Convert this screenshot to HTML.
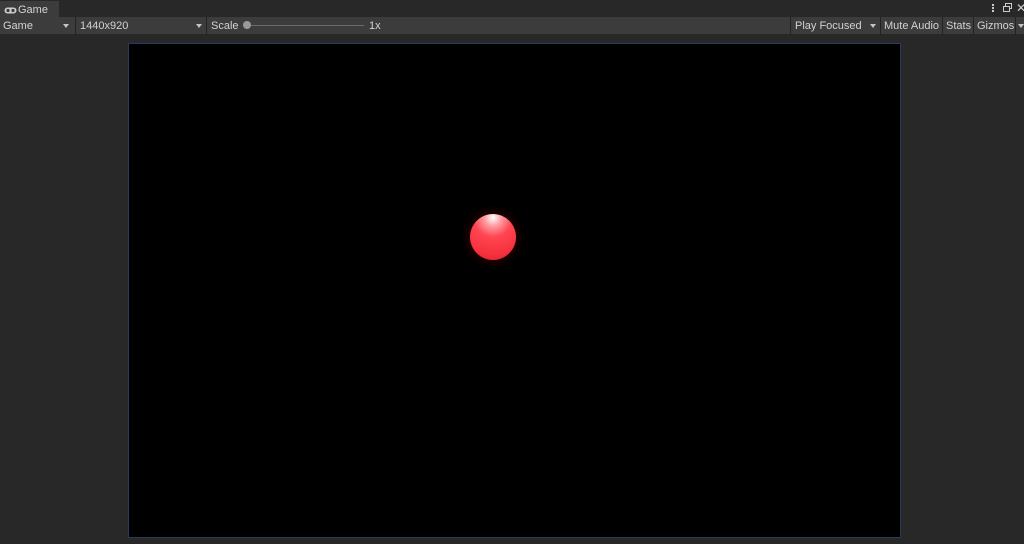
<!DOCTYPE html>
<html><head><style>
body{margin:0;width:1024px;height:544px;background:#282828;font-family:"Liberation Sans",sans-serif;font-size:11px;color:#d2d2d2;position:relative;overflow:hidden}
.a{position:absolute}
.tb{top:17px;height:17px;background:#3c3c3c;line-height:17px}
.t{position:absolute;top:18px;line-height:17px}
.tri{position:absolute;top:7px;width:0;height:0;border-left:3.5px solid transparent;border-right:3.5px solid transparent;border-top:4px solid #c4c4c4}
.sep{position:absolute;top:17px;width:1px;height:17px;background:#232323}
</style></head><body>
<div class="a" style="left:0;top:0;width:1024px;height:17px;background:#282828"></div>
<div class="a" style="left:0;top:1px;width:59px;height:16px;background:#3c3c3c;line-height:17px">
<svg class="a" style="left:4px;top:6px" width="13" height="7" viewBox="0 0 13 7"><rect x="0.5" y="0.5" width="12" height="6" rx="3" fill="#ccc"/><circle cx="4" cy="3.5" r="1.6" fill="#3c3c3c"/><circle cx="9" cy="3.5" r="1.6" fill="#3c3c3c"/></svg>
<span class="a" style="left:18px;top:1px">Game</span></div>
<div class="a" style="left:992px;top:4px;width:2px;height:8px;border-left:2px dotted #ccc"></div>
<svg class="a" style="left:1003px;top:3px" width="9" height="9"><rect x="2.5" y="0.5" width="6" height="5" fill="none" stroke="#ccc"/><rect x="0.5" y="3.5" width="6" height="5" fill="#282828" stroke="#ccc"/></svg>
<div class="a" style="left:1016px;top:1px;font-size:12px;color:#ccc">✕</div>
<div class="a tb" style="left:0;width:1024px"></div>
<span class="t" style="left:3px">Game</span><div class="tri" style="left:63px;top:24px"></div>
<div class="sep" style="left:75px"></div>
<span class="t" style="left:80px">1440x920</span><div class="tri" style="left:196px;top:24px"></div>
<div class="sep" style="left:206px"></div>
<span class="t" style="left:211px">Scale</span>
<div class="a" style="left:247px;top:25px;width:117px;height:1px;background:#6a6a6a"></div>
<div class="a" style="left:243px;top:21px;width:8px;height:8px;border-radius:50%;background:#999"></div>
<span class="t" style="left:369px">1x</span>
<div class="sep" style="left:790px"></div>
<span class="t" style="left:795px">Play Focused</span><div class="tri" style="left:870px;top:24px"></div>
<div class="sep" style="left:880px"></div>
<span class="t" style="left:884px">Mute Audio</span>
<div class="sep" style="left:942px"></div>
<span class="t" style="left:946px">Stats</span>
<div class="sep" style="left:973px"></div>
<span class="t" style="left:977px">Gizmos</span>
<div class="sep" style="left:1015px"></div><div class="tri" style="left:1018px;top:24px"></div>
<div class="a" style="left:128px;top:43px;width:771px;height:493px;background:#000;border:1px solid #283a60"></div>
<div class="a" style="left:462px;top:206px;width:62px;height:62px;border-radius:50%;background:radial-gradient(circle,rgba(90,0,0,0.5) 40%,rgba(0,0,0,0) 72%)"></div>
<div class="a" style="left:470px;top:214px;width:46px;height:46px;border-radius:50%;background:radial-gradient(circle at 50% 8%,#fff 0,#ff9aa0 18%,#ff4652 40%,#f6323e 75%,#d92430 100%)"></div>
</body></html>
